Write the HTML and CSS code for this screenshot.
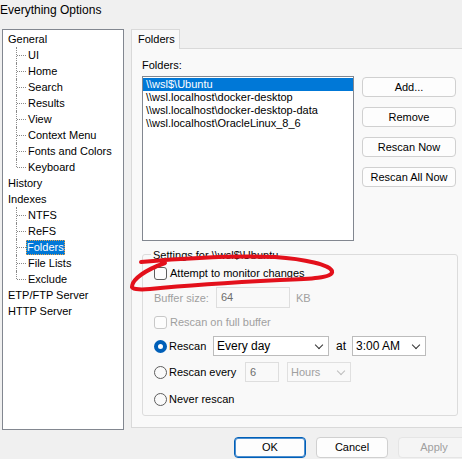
FILE: index.html
```html
<!DOCTYPE html>
<html>
<head>
<meta charset="utf-8">
<title>Everything Options</title>
<link rel="stylesheet" href="styles.css">
</head>
<body>
<div class="window">
  <div class="titlebar">Everything Options</div>
  <div class="main">
    <div class="tree">
      <div class="node">General</div>
      <div class="node child">UI</div>
      <div class="node child">Home</div>
      <div class="node child">Search</div>
      <div class="node child">Results</div>
      <div class="node child">View</div>
      <div class="node child">Context Menu</div>
      <div class="node child">Fonts and Colors</div>
      <div class="node child last">Keyboard</div>
      <div class="node">History</div>
      <div class="node">Indexes</div>
      <div class="node child">NTFS</div>
      <div class="node child">ReFS</div>
      <div class="node child"><span class="sel">Folders</span></div>
      <div class="node child">File Lists</div>
      <div class="node child last">Exclude</div>
      <div class="node">ETP/FTP Server</div>
      <div class="node">HTTP Server</div>
    </div>
    <div class="tabs">
      <div class="tabrow"><div class="tab">Folders</div></div>
      <div class="panel">
        <div class="label">Folders:</div>
        <div class="folders">
          <div class="list">
            <div class="item selected">\\wsl$\Ubuntu</div>
            <div class="item">\\wsl.localhost\docker-desktop</div>
            <div class="item">\\wsl.localhost\docker-desktop-data</div>
            <div class="item">\\wsl.localhost\OracleLinux_8_6</div>
          </div>
          <div class="btncol">
            <div class="btn">Add...</div>
            <div class="btn">Remove</div>
            <div class="btn">Rescan Now</div>
            <div class="btn">Rescan All Now</div>
          </div>
        </div>
        <div class="group">
          <div class="legend">Settings for \\wsl$\Ubuntu</div>
          <div class="row r1"><span class="check"></span><span>Attempt to monitor changes</span></div>
          <div class="row r2 disabled"><span class="lbl-buf">Buffer size:</span><span class="input w-buf">64</span><span class="unit">KB</span></div>
          <div class="row r3 disabled"><span class="check dis"></span><span>Rescan on full buffer</span></div>
          <div class="row r4">
            <span class="opt w-rescan"><span class="radio on"></span>Rescan</span>
            <span class="combo w-day">Every day<span class="chev"></span></span>
            <span class="at">at</span>
            <span class="combo w-time">3:00 AM<span class="chev"></span></span>
          </div>
          <div class="row r5">
            <span class="opt w-every"><span class="radio"></span>Rescan every</span>
            <span class="input dis w-num">6</span>
            <span class="combo dis w-hours">Hours<span class="chev"></span></span>
          </div>
          <div class="row r6"><span class="opt"><span class="radio"></span>Never rescan</span></div>
        </div>
      </div>
    </div>
  </div>
  <div class="footer">
    <div class="btn fbtn default">OK</div>
    <div class="btn fbtn">Cancel</div>
    <div class="btn fbtn disabledbtn">Apply</div>
  </div>
</div>
<svg class="annot" width="462" height="459" viewBox="0 0 462 459">
  <path d="M141,262 C175,259 230,255 275,257 C305,259 330,265 332,271 C334,278 310,279 280,280 C240,282 190,285 150,289 C138,290 131,289 132,286 C133,279 145,270 165,263" fill="none" stroke="#e3101b" stroke-width="4" stroke-linecap="round" stroke-linejoin="round"/>
</svg>
</body>
</html>
```

FILE: styles.css
```css
html, body {
  margin: 0;
  padding: 0;
}
body {
  width: 462px;
  height: 459px;
  overflow: hidden;
  background: #f0f0f0;
  font-family: "Liberation Sans", Arial, sans-serif;
  font-size: 11px;
  color: #000;
  position: relative;
}
.window {
  width: 472px;
}
.titlebar {
  height: 29px;
  box-sizing: border-box;
  padding-top: 2px;
  line-height: 16px;
  font-size: 12px;
  background: #f0f0f0;
}
.main {
  display: flex;
  height: 401px;
  padding-left: 2px;
}
.tree {
  width: 122px;
  height: 401px;
  box-sizing: border-box;
  border: 1px solid #828790;
  background: #fff;
  padding-top: 1px;
  font-size: 11px;
}
.node {
  height: 16px;
  line-height: 16px;
  padding-left: 5px;
  position: relative;
  white-space: nowrap;
}
.node.child {
  padding-left: 25px;
}
.node.child::before {
  content: "";
  position: absolute;
  left: 13px;
  top: 0;
  height: 16px;
  border-left: 1px dotted #8a8a8a;
}
.node.child.last::before {
  height: 8px;
}
.node.child::after {
  content: "";
  position: absolute;
  left: 14px;
  top: 8px;
  width: 9px;
  border-top: 1px dotted #8a8a8a;
}
.sel {
  display: inline-block;
  margin-left: -2px;
  padding: 0 1px;
  height: 15px;
  line-height: 14px;
  box-sizing: border-box;
  background: #0078d7;
  color: #fff;
  outline: 1px dotted #e7a34a;
  outline-offset: -1px;
}
.tabs {
  margin-left: 7px;
  width: 338px;
  display: flex;
  flex-direction: column;
}
.tabrow {
  display: flex;
  height: 19px;
}
.tab {
  width: 49px;
  height: 20px;
  box-sizing: border-box;
  border: 1px solid #d9d9d9;
  border-bottom: none;
  background: #f9f9f9;
  padding-left: 6px;
  line-height: 18px;
  position: relative;
  z-index: 1;
}
.panel {
  height: 380px;
  box-sizing: border-box;
  border: 1px solid #d9d9d9;
  background: #f9f9f9;
  padding: 8px 0 0 10px;
}
.label {
  line-height: 16px;
  height: 16px;
}
.folders {
  display: flex;
  margin-top: 3px;
}
.list {
  width: 212px;
  height: 165px;
  box-sizing: border-box;
  border: 1px solid #828790;
  background: #fff;
  padding-top: 1px;
}
.item {
  height: 13px;
  line-height: 13px;
  padding-left: 3px;
  white-space: nowrap;
}
.item.selected {
  background: #0078d7;
  color: #fff;
}
.btncol {
  margin-left: 8px;
  margin-top: 1px;
  display: flex;
  flex-direction: column;
  gap: 10px;
}
.btn {
  width: 94px;
  height: 20px;
  box-sizing: border-box;
  border: 1px solid #d0d0d0;
  border-radius: 4px;
  background: #fdfdfd;
  text-align: center;
  line-height: 18px;
}
.group {
  margin-top: 13px;
  width: 316px;
  height: 162px;
  box-sizing: border-box;
  border: 1px solid #dcdcdc;
  border-radius: 3px;
  padding-left: 11px;
}
.legend {
  display: block;
  width: max-content;
  margin-top: -8px;
  margin-left: -3px;
  padding: 0 2px;
  line-height: 16px;
  height: 16px;
  background: #f9f9f9;
}
.row {
  display: flex;
  align-items: center;
  white-space: nowrap;
}
.r1 { margin-top: 1px; height: 18px; }
.r2 { margin-top: 5px; height: 21px; }
.r3 { margin-top: 5px; height: 18px; }
.r4 { margin-top: 5px; height: 20px; }
.r5 { margin-top: 6px; height: 20px; }
.r6 { margin-top: 8px; height: 18px; }
.disabled { color: #a0a0a0; }
.check {
  width: 13px;
  height: 13px;
  box-sizing: border-box;
  border: 1px solid #5d5d5d;
  border-radius: 3px;
  background: #fdfdfd;
  margin-right: 3px;
  flex: none;
}
.check.dis {
  border-color: #c8c8c8;
}
.lbl-buf { width: 62px; }
.input {
  height: 21px;
  box-sizing: border-box;
  border: 1px solid #dedede;
  background: #f9f9f9;
  color: #6d6d6d;
  padding-left: 4px;
  line-height: 19px;
}
.w-buf { width: 74px; }
.unit { margin-left: 6px; }
.opt {
  display: flex;
  align-items: center;
}
.w-rescan { width: 59px; }
.w-every { width: 91px; }
.radio {
  width: 13px;
  height: 13px;
  box-sizing: border-box;
  border: 1px solid #5d5d5d;
  border-radius: 50%;
  background: #fafafa;
  margin-right: 2px;
  flex: none;
}
.radio.on {
  border: 4px solid #005fb8;
  background: #fff;
}
.combo {
  height: 20px;
  box-sizing: border-box;
  border: 1px solid #bcbcbc;
  background: #fff;
  padding-left: 3px;
  line-height: 18px;
  font-size: 12px;
  position: relative;
  display: flex;
  align-items: center;
}
.combo .chev {
  position: absolute;
  right: 6px;
  top: 5px;
  width: 5px;
  height: 5px;
  border-right: 1px solid #333;
  border-bottom: 1px solid #333;
  transform: rotate(45deg);
}
.combo.dis {
  border-color: #e0e0e0;
  background: #f9f9f9;
  color: #a0a0a0;
  font-size: 11px;
}
.combo.dis .chev {
  border-color: #bdbdbd;
}
.w-day { width: 116px; }
.w-time { width: 74px; }
.w-num { width: 34px; height: 20px; line-height: 18px; }
.w-hours { width: 64px; margin-left: 8px; }
.at { margin-left: 7px; width: 16px; font-size: 12px; }
.footer {
  height: 29px;
  box-sizing: border-box;
  padding-top: 7px;
  padding-left: 234px;
  display: flex;
  gap: 10px;
}
.fbtn {
  width: 72px;
  height: 21px;
  line-height: 19px;
}
.fbtn.default {
  border-color: #005fb8;
  box-shadow: inset 0 0 0 1px #4d8fcf;
}
.fbtn.disabledbtn {
  background: #f5f5f5;
  border-color: #e5e5e5;
  color: #a0a0a0;
}
.annot {
  position: absolute;
  left: 0;
  top: 0;
  pointer-events: none;
}
```
